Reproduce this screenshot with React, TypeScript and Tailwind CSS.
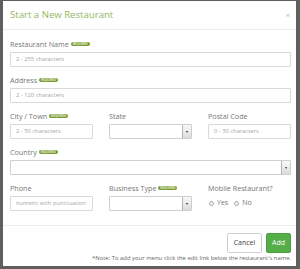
const font = { fontFamily: '"Open Sans", "Liberation Sans", sans-serif' };

const Required = () => (
  <span className="ml-[2px] inline-flex h-[4px] w-[19px] items-center justify-center rounded-full bg-[#789a2e] text-[3px] leading-none font-bold text-white/80">
    REQUIRED
  </span>
);

const Label = (props: { text: string; required?: boolean }) => (
  <div className="flex h-[10px] items-center text-[7.2px] leading-[10px] text-[#777]">
    {props.text}
    {props.required && <Required />}
  </div>
);

const TextInput = (props: { placeholder: string }) => (
  <div className="mt-[3px] flex h-[15px] items-center overflow-hidden rounded-[1px] border border-[#d9d9d9] bg-white px-[5px] text-[5.8px] whitespace-nowrap text-[#a5a5a5]">
    {props.placeholder}
  </div>
);

const SelectBox = () => (
  <div className="mt-[3px] flex h-[15px] items-stretch justify-end rounded-[1px] border border-[#cfcfcf] bg-white">
    <div className="flex w-[9px] items-center justify-center border-l border-[#b5b5b5] bg-gradient-to-b from-[#fafafa] to-[#dcdcdc]">
      <span className="h-0 w-0 border-x-[1.5px] border-t-[2px] border-x-transparent border-t-[#333]" />
    </div>
  </div>
);

export default function App() {
  return (
    <div className="h-[269px] w-[300px] bg-[#5f5f5f] pt-[1px] pr-[4px] pb-[3px] pl-[3px]" style={font}>
      <div className="flex h-full flex-col bg-white">
        <div className="flex h-[29px] items-center justify-between border-b border-[#ececec] pr-[6px] pl-[7px]">
          <span className="text-[9.6px] text-[#92b862]">Start a New Restaurant</span>
          <span className="text-[8px] leading-none text-[#b8b8b8]">×</span>
        </div>

        <div className="pt-[9px] pr-[5px] pl-[7px]">
          <div className="mb-[8px]">
            <Label text="Restaurant Name" required />
            <TextInput placeholder="2 - 255 characters" />
          </div>
          <div className="mb-[8px]">
            <Label text="Address" required />
            <TextInput placeholder="2 - 120 characters" />
          </div>
          <div className="mb-[8px] grid grid-cols-3 gap-x-[16px]">
            <div>
              <Label text="City / Town" required />
              <TextInput placeholder="2 - 50 characters" />
            </div>
            <div>
              <Label text="State" />
              <SelectBox />
            </div>
            <div>
              <Label text="Postal Code" />
              <TextInput placeholder="0 - 30 characters" />
            </div>
          </div>
          <div className="mb-[8px]">
            <Label text="Country" required />
            <SelectBox />
          </div>
          <div className="grid grid-cols-3 gap-x-[16px]">
            <div>
              <Label text="Phone" />
              <TextInput placeholder="numeric with punctuation" />
            </div>
            <div>
              <Label text="Business Type" required />
              <SelectBox />
            </div>
            <div>
              <Label text="Mobile Restaurant?" />
              <div className="mt-[3px] flex h-[15px] items-center gap-[6px] pl-[1px] text-[7px] text-[#777]">
                <span className="flex items-center gap-[3px]">
                  <span className="h-[5px] w-[5px] rounded-full border border-[#aaa] bg-[#f3f3f3]" />
                  Yes
                </span>
                <span className="flex items-center gap-[3px]">
                  <span className="h-[5px] w-[5px] rounded-full border border-[#aaa] bg-[#f3f3f3]" />
                  No
                </span>
              </div>
            </div>
          </div>
        </div>

        <div className="mt-[14px] flex flex-1 flex-col items-end border-t border-[#ececec] pt-[7px] pr-[5px]">
          <div className="flex gap-[4px]">
            <button className="h-[20px] w-[35px] rounded-[2px] border border-[#cfcfcf] bg-white text-[7px] text-[#444]">
              Cancel
            </button>
            <button className="h-[20px] w-[25px] rounded-[2px] border border-[#4a9e3f] bg-[#55ad48] text-[7px] text-white">
              Add
            </button>
          </div>
          <p className="mt-[2px] text-[5.9px] leading-[7px] whitespace-nowrap text-[#666]">
            *Note: To add your menu click the edit link below the restaurant's name.
          </p>
        </div>
      </div>
    </div>
  );
}
